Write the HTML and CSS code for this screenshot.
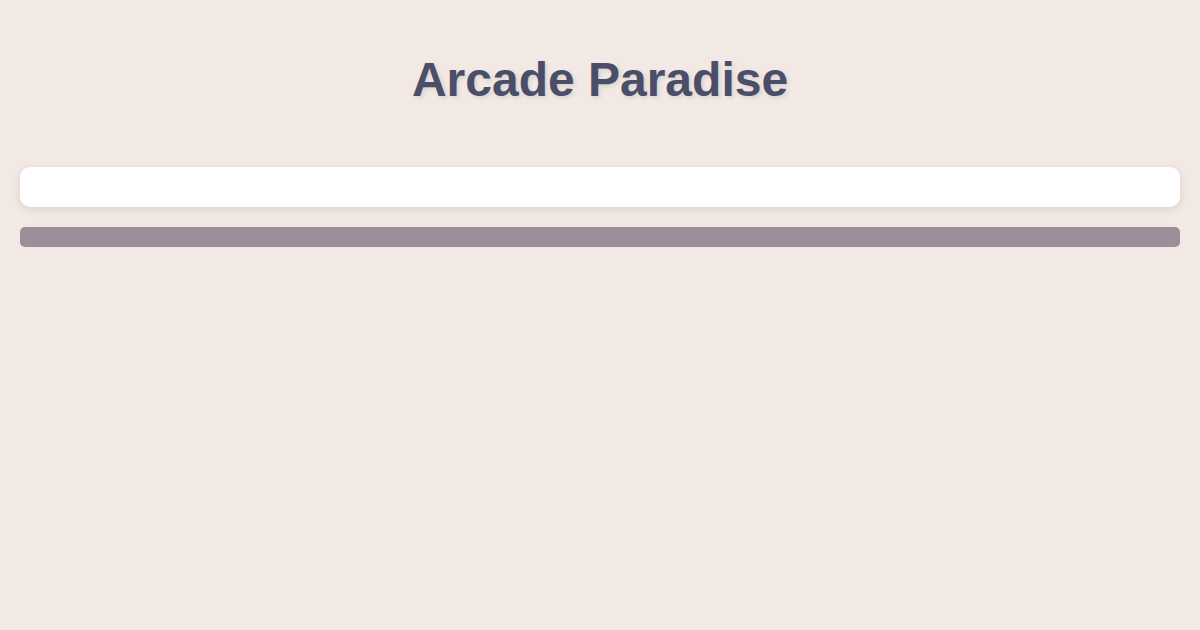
FILE: index.html
```html
<!DOCTYPE html>
<html lang="en">
	<head>
		<meta charset="utf-8">
		<title>Arcade Paradise</title>
		<meta name="viewport" content="width=device-width, initial-scale=1">
		<link rel="stylesheet" href="styles.css">
	</head>
	<body>
		<div class="page">
			<h1 class="title">Arcade Paradise</h1>
			<div class="search-box"></div>
			<div class="loader-bar"></div>
		</div>
	</body>
</html>
```

FILE: styles.css
```css
body{
	margin: 0;
	background: #f2e9e5;
	font-family: "Liberation Sans", Arial, sans-serif;
}
.page{
	padding: 20px;
	display: flex;
	flex-direction: column;
}
.title{
	font-size: 48px;
	font-weight: bold;
	color: #4a4e69;
	text-align: center;
	margin: 32px 0 60px 0;
	text-shadow: 2px 2px 4px rgba(0,0,0,0.1);
}
.search-box{
	height: 40px;
	background: #ffffff;
	border-radius: 10px;
	box-shadow: 0 2px 8px rgba(0,0,0,0.1);
}
.loader-bar{
	height: 20px;
	margin-top: 20px;
	background: #9d8e99;
	border-radius: 5px;
}
```
